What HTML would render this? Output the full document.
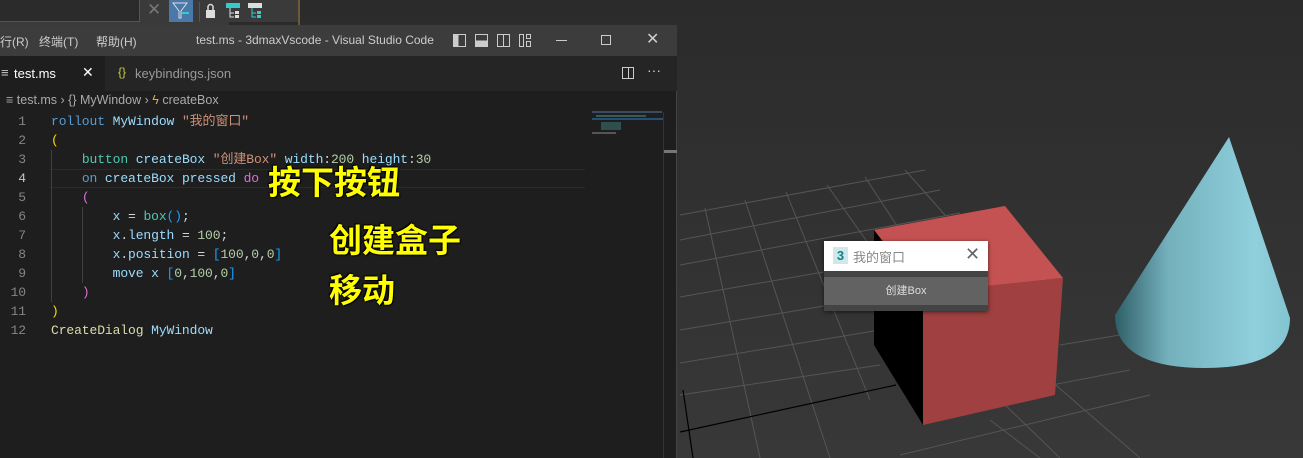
<!DOCTYPE html>
<html><head><meta charset="utf-8">
<style>
*{margin:0;padding:0;box-sizing:border-box}
body{width:1303px;height:458px;overflow:hidden;background:#2e2e2e;position:relative;font-family:"Liberation Sans","Noto Sans CJK SC",sans-serif}
.abs{position:absolute}
.mono{font-family:"Liberation Mono","Noto Sans CJK SC",monospace;font-size:13px;white-space:pre;letter-spacing:-0.1px}
.ln{position:absolute;left:0;width:26px;text-align:right;color:#858585}
.cl{position:absolute;left:51px;color:#d4d4d4}
.k{color:#569cd6}.v{color:#9cdcfe}.s{color:#ce9178}.f{color:#dcdcaa}.t{color:#4ec9b0}.n{color:#b5cea8}.y{color:#ffd700}.p{color:#da70d6}.b{color:#179fff}
.big{position:absolute;color:#ffff00;font-weight:bold;font-size:33px;font-family:"Noto Sans CJK SC",sans-serif;text-shadow:0 0 2px #000,1px 1px 1px #000,-1px -1px 1px #000;line-height:1}
</style></head><body>
<svg class="abs" style="left:0;top:0" width="1303" height="458">
<defs>
<linearGradient id="bg" x1="0" y1="0" x2="0" y2="1"><stop offset="0" stop-color="#2b2b2b"/><stop offset="1" stop-color="#383838"/></linearGradient>
<linearGradient id="cg" x1="0" x2="1"><stop offset="0" stop-color="#2f5f68"/><stop offset="0.3" stop-color="#73b0bc"/><stop offset="0.8" stop-color="#8fd0dc"/><stop offset="1" stop-color="#82c4d0"/></linearGradient>
</defs>
<rect x="0" y="0" width="1303" height="458" fill="url(#bg)"/>
<g stroke="#555" stroke-width="1" fill="none">
<line x1="680" y1="215" x2="925" y2="170"/>
<line x1="680" y1="240" x2="940" y2="190"/>
<line x1="680" y1="265" x2="960" y2="213"/>
<line x1="680" y1="297" x2="990" y2="243"/>
<line x1="680" y1="330" x2="830" y2="305"/>
<line x1="680" y1="363" x2="880" y2="330"/>
<line x1="680" y1="395" x2="880" y2="365"/>
<line x1="900" y1="455" x2="1150" y2="395"/>
<line x1="1000" y1="395" x2="1130" y2="370"/>
<line x1="1060" y1="345" x2="1120" y2="335"/>
<line x1="705" y1="208" x2="760" y2="458"/>
<line x1="745" y1="200" x2="830" y2="458"/>
<line x1="786" y1="192" x2="870" y2="400"/>
<line x1="827" y1="185" x2="880" y2="260"/>
<line x1="865" y1="177" x2="905" y2="238"/>
<line x1="905" y1="170" x2="945" y2="215"/>
<line x1="1000" y1="400" x2="1060" y2="458"/>
<line x1="1050" y1="380" x2="1140" y2="458"/>
<line x1="990" y1="420" x2="1040" y2="458"/>
</g>
<line x1="680" y1="432" x2="896" y2="385" stroke="#000" stroke-width="1.2"/>
<line x1="683" y1="390" x2="693" y2="458" stroke="#000" stroke-width="1.2"/>
<polygon points="874,230 1005,206 1063,278 923,293" fill="#c55252"/>
<polygon points="923,293 1063,278 1055,395 923,425" fill="#a04040"/>
<polygon points="874,230 923,293 923,425 874,345" fill="#000"/>
<path d="M1229,137 L1290,318 Q1290,368 1205,368 Q1115,368 1115,315 Z" fill="url(#cg)"/>
</svg>
<div class="abs" style="left:824px;top:241px;width:164px;height:70px;background:#444;box-shadow:0 1px 4px rgba(0,0,0,.6)">
 <div style="height:30px;background:#fff;position:relative">
  <div class="abs" style="left:9px;top:6px;width:15px;height:17px;background:#cfe9ea;color:#12808a;font-weight:bold;font-size:13px;text-align:center;line-height:17px">3</div>
  <div class="abs" style="left:29px;top:6px;font-size:13px;color:#888">我的窗口</div>
  <div class="abs" style="left:141px;top:3px;font-size:18px;color:#666">✕</div>
 </div>
 <div class="abs" style="left:0;top:36px;width:164px;height:28px;background:#626262;color:#ddd;font-size:11px;text-align:center;line-height:28px">创建Box</div>
</div>
<div class="abs" style="left:0;top:0;width:300px;height:25px;background:#3a3a3a"></div>
<div class="abs" style="left:0;top:0;width:140px;height:22px;background:#2b2b2b;border:1px solid #555;border-top:none;border-left:none"></div>
<div class="abs" style="left:147px;top:0;color:#777;font-size:17px">✕</div>
<div class="abs" style="left:169px;top:0;width:24px;height:22px;background:#4a78a8"></div>
<svg class="abs" style="left:169px;top:0" width="24" height="22"><path d="M4,3 L18,3 L12,11 L12,18 L10,18 L10,11 Z" fill="none" stroke="#ddd"/><path d="M13,13 L20,13" stroke="#3cc" stroke-width="2"/></svg>
<div class="abs" style="left:199px;top:2px;width:1px;height:20px;background:#555"></div>
<svg class="abs" style="left:204px;top:3px" width="70" height="18"><rect x="2" y="7" width="9" height="8" fill="#ddd"/><path d="M4,7 V4 a2.5,2.5 0 0 1 5,0 V7" stroke="#ddd" fill="none" stroke-width="1.5"/><rect x="22" y="0" width="14" height="5" fill="#3cc"/><path d="M26,5 V14 H30 M26,10 H30" stroke="#ddd" fill="none"/><rect x="31" y="8" width="4" height="3" fill="#ddd"/><rect x="31" y="12" width="4" height="3" fill="#ddd"/><rect x="44" y="0" width="14" height="5" fill="#ddd"/><path d="M48,5 V14 H52 M48,10 H52" stroke="#3cc" fill="none"/><rect x="53" y="8" width="4" height="3" fill="#3cc"/><rect x="53" y="12" width="4" height="3" fill="#3cc"/></svg>
<div class="abs" style="left:229px;top:22px;width:71px;height:3px;background:#2b2b2b"></div>
<div class="abs" style="left:298px;top:0;width:2px;height:25px;background:#6a5a3a"></div>
<div class="abs" style="left:0;top:25px;width:677px;height:433px;background:#1e1e1e;border-right:1px solid #444">
 <div class="abs" style="left:0;top:0;width:677px;height:31px;background:#3c3c3c;font-size:12px;color:#ccc">
  <span class="abs" style="left:0;top:8px">行(R)</span>
  <span class="abs" style="left:39px;top:8px">终端(T)</span>
  <span class="abs" style="left:96px;top:8px">帮助(H)</span>
  <span class="abs" style="left:196px;top:8px">test.ms - 3dmaxVscode - Visual Studio Code</span>
  <svg class="abs" style="left:452px;top:8px" width="85" height="16" fill="none" stroke="#ccc"><rect x="1.5" y="1.5" width="12" height="12"/><rect x="2" y="2" width="4" height="11" fill="#ccc"/><rect x="23.5" y="1.5" width="12" height="12"/><rect x="24" y="8" width="11" height="5" fill="#ccc"/><rect x="45.5" y="1.5" width="12" height="12"/><line x1="51.5" y1="2" x2="51.5" y2="13"/><rect x="67.5" y="1.5" width="4" height="12"/><rect x="74.5" y="1.5" width="4" height="4"/><rect x="74.5" y="8.5" width="4" height="5"/></svg>
  <div class="abs" style="left:556px;top:15px;width:11px;height:1px;background:#ccc"></div>
  <div class="abs" style="left:601px;top:10px;width:10px;height:10px;border:1px solid #ccc"></div>
  <span class="abs" style="left:646px;top:4px;font-size:16px">✕</span>
 </div>
 <div class="abs" style="left:0;top:31px;width:677px;height:35px;background:#252526">
  <div class="abs" style="left:0;top:0;width:105px;height:35px;background:#1e1e1e;color:#fff;font-size:13px">
   <span class="abs" style="left:1px;top:9px;color:#ccc">≡</span><span class="abs" style="left:14px;top:10px">test.ms</span><span class="abs" style="left:82px;top:8px;font-size:14px">✕</span></div>
  <div class="abs" style="left:106px;top:0;width:152px;height:35px;color:#999;font-size:13px"><span class="abs" style="left:12px;top:9px;color:#cbcb41;font-size:12px">{}</span><span class="abs" style="left:29px;top:10px">keybindings.json</span></div>
  <div class="abs" style="left:622px;top:11px;width:12px;height:12px;border:1px solid #ccc"></div><div class="abs" style="left:628px;top:11px;width:1px;height:12px;background:#ccc"></div>
  <span class="abs" style="left:647px;top:6px;color:#ccc;font-size:14px">···</span>
 </div>
 <div class="abs" style="left:0;top:68px;height:20px;font-size:12.5px;color:#aaa;white-space:pre"><span style="margin-left:6px">≡ test.ms › {} MyWindow › <span style="color:#e8a33d">ϟ</span> createBox</span></div>
 <div class="abs mono" style="left:0;top:87px;width:590px;height:240px;line-height:19px">
  <div class="abs" style="left:49px;top:57px;width:536px;height:19px;border-top:1px solid #2a2a2a;border-bottom:1px solid #2a2a2a"></div>
  <div class="abs" style="left:51px;top:38px;width:1px;height:152px;background:#404040"></div>
  <div class="abs" style="left:82px;top:95px;width:1px;height:76px;background:#404040"></div>
  <div class="ln" style="top:0">1</div><div class="ln" style="top:19px">2</div><div class="ln" style="top:38px">3</div><div class="ln" style="top:57px;color:#c6c6c6">4</div><div class="ln" style="top:76px">5</div><div class="ln" style="top:95px">6</div><div class="ln" style="top:114px">7</div><div class="ln" style="top:133px">8</div><div class="ln" style="top:152px">9</div><div class="ln" style="top:171px">10</div><div class="ln" style="top:190px">11</div><div class="ln" style="top:209px">12</div>
  <div class="cl" style="top:0"><span class="k">rollout</span> <span class="v">MyWindow</span> <span class="s">"我的窗口"</span></div>
  <div class="cl" style="top:19px"><span class="y">(</span></div>
  <div class="cl" style="top:38px">    <span class="t">button</span> <span class="v">createBox</span> <span class="s">"创建Box"</span> <span class="v">width</span>:<span class="n">200</span> <span class="v">height</span>:<span class="n">30</span></div>
  <div class="cl" style="top:57px">    <span class="k">on</span> <span class="v">createBox</span> <span class="v">pressed</span> <span class="p">do</span></div>
  <div class="cl" style="top:76px">    <span class="p">(</span></div>
  <div class="cl" style="top:95px">        <span class="v">x</span> = <span class="t">box</span><span class="b">()</span>;</div>
  <div class="cl" style="top:114px">        <span class="v">x</span>.<span class="v">length</span> = <span class="n">100</span>;</div>
  <div class="cl" style="top:133px">        <span class="v">x</span>.<span class="v">position</span> = <span class="b">[</span><span class="n">100</span>,<span class="n">0</span>,<span class="n">0</span><span class="b">]</span></div>
  <div class="cl" style="top:152px">        <span class="v">move</span> <span class="v">x</span> <span class="b">[</span><span class="n">0</span>,<span class="n">100</span>,<span class="n">0</span><span class="b">]</span></div>
  <div class="cl" style="top:171px">    <span class="p">)</span></div>
  <div class="cl" style="top:190px"><span class="y">)</span></div>
  <div class="cl" style="top:209px"><span class="f">CreateDialog</span> <span class="v">MyWindow</span></div>
 </div>
 <div class="abs" style="left:592px;top:86px;width:70px;height:2px;background:#3a4a60"></div>
 <div class="abs" style="left:596px;top:90px;width:50px;height:2px;background:#3a5a50"></div>
 <div class="abs" style="left:592px;top:93px;width:72px;height:2px;background:#264f78"></div>
 <div class="abs" style="left:601px;top:97px;width:20px;height:8px;background:#2f4f4f"></div>
 <div class="abs" style="left:592px;top:107px;width:24px;height:2px;background:#555"></div>
 <div class="abs" style="left:663px;top:87px;width:1px;height:346px;background:#333"></div>
 <div class="abs" style="left:664px;top:125px;width:13px;height:3px;background:#777"></div>
</div>
<div class="big" style="left:268px;top:164px">按下按钮</div>
<div class="big" style="left:329px;top:222px">创建盒子</div>
<div class="big" style="left:329px;top:272px">移动</div>
</body></html>
